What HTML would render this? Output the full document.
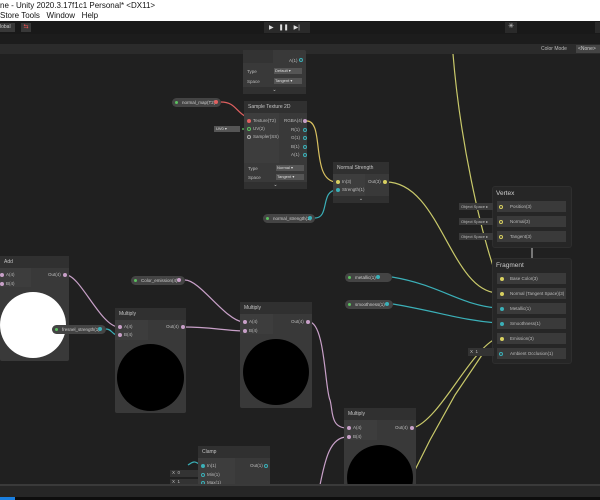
<!DOCTYPE html>
<html><head><style>
*{margin:0;padding:0;box-sizing:border-box}
html,body{width:600px;height:500px;overflow:hidden}
body{background:#202020;font-family:"Liberation Sans",sans-serif;position:relative}
#w{position:absolute;left:0;top:0;width:600px;height:500px;overflow:hidden}
.a{position:absolute}
.t{font-size:8px;color:#111;white-space:nowrap}
.node{position:absolute;background:#393939;border-radius:2px}
.hdr{height:12px;background:#303030;color:#c4c4c4;font-size:5px;padding:3px 4px}
.lbl{position:absolute;font-size:4.5px;color:#bbb;white-space:nowrap}
.pill{position:absolute;height:9px;background:#444;border-radius:5px;font-size:4.5px;color:#ccc;padding:2px 0 0 10px;white-space:nowrap}
.dot{position:absolute;width:4px;height:4px;border-radius:2px}
.blk{position:absolute;background:#262626;border:1px solid #2e2e2e;border-radius:3px}
.cir{position:absolute;border-radius:50%}
.os{position:absolute;width:34px;height:7px;background:#3a3a3a;font-size:4px;color:#bbb;padding:1px 2px}
.r{position:absolute;left:497px;width:69px;height:11px;background:#3a3a3a;font-size:4.5px;color:#bbb;padding:3px 0 0 13px}
</style></head><body><div id="w">
<div class="a" style="left:0;top:0;width:600px;height:21px;background:#fff"></div>
<div class="a t" style="left:0;top:1px">ne - Unity 2020.3.17f1c1 Personal* &lt;DX11&gt;</div>
<div class="a t" style="left:0;top:11px">Store Tools&nbsp;&nbsp; Window&nbsp;&nbsp; Help</div>
<div class="a" style="left:0;top:21px;width:600px;height:13px;background:#191919"></div>
<div class="a" style="left:0;top:23px;width:15px;height:9px;background:#383838;font-size:5px;color:#ccc;padding:1px 0 0 0">lobal</div>
<div class="a" style="left:21px;top:23px;width:10px;height:9px;background:#383838;color:#e55;font-size:6px;text-align:center">⇆</div>
<div class="a" style="left:264px;top:22px;width:46px;height:11px;background:#2a2a2a;color:#ddd;font-size:6px;padding:2px 0 0 5px">▶&nbsp;&nbsp;&nbsp;❚❚&nbsp;&nbsp;&nbsp;▶|</div>
<div class="a" style="left:505px;top:22px;width:12px;height:11px;background:#2a2a2a;color:#ccc;font-size:7px;text-align:center">✳</div>
<div class="a" style="left:595px;top:22px;width:5px;height:11px;background:#2a2a2a"></div>
<div class="a" style="left:0;top:34px;width:600px;height:10px;background:#1c1c1c"></div>
<div class="a" style="left:0;top:44px;width:600px;height:10px;background:#2b2b2b"></div>
<div class="a" style="left:541px;top:46px;font-size:5px;color:#bbb">Color Mode</div>
<div class="a" style="left:576px;top:45px;width:24px;height:8px;background:#444;font-size:5px;color:#ccc;padding:1px 0 0 2px">&lt;None&gt;</div>

<svg class="a" style="left:0;top:0" width="600" height="500" fill="none" stroke-width="1.2">
<path d="M453 54 C460 140 480 230 497 278" stroke="#c9c96a"/>
<path d="M386 182 C440 182 450 290 497 293" stroke="#c9c96a"/>
<path d="M392 277 C440 285 460 305 497 308" stroke="#3bb0b8"/>
<path d="M393 304 C440 312 460 320 497 323" stroke="#3bb0b8"/>
<path d="M413 428 C440 420 470 350 497 338" stroke="#c9c96a"/>
<path d="M484 352 L455 395 L430 440 L415 470" stroke="#c9c96a"/>
<path d="M221 102 C240 102 235 120 262 120" stroke="#e06060"/>
<path d="M242 129 L262 129" stroke="#5cc060"/>
<path d="M307 121 C325 121 310 182 337 182" stroke="#d8c060"/>
<path d="M315 218 C330 218 320 190 337 190" stroke="#3bb0b8"/>
<path d="M66 275 C80 275 100 325 118 327" stroke="#c8a0c8"/>
<path d="M106 329 C112 329 112 335 118 335" stroke="#3bb0b8"/>
<path d="M183 327 C210 327 220 330 243 331" stroke="#c8a0c8"/>
<path d="M185 280 C200 280 225 320 243 322" stroke="#c8a0c8"/>
<path d="M309 322 C325 322 325 390 330 400 C333 410 330 428 347 428" stroke="#c8a0c8"/>
<path d="M347 437 C330 437 325 460 320 485" stroke="#c8a0c8"/>
<path d="M188 465 C195 460 195 462 201 465" stroke="#3bb0b8"/>
<path d="M532 248 L532 258" stroke="#ccc" stroke-width="1"/>
</svg>

<div class="node" style="left:243px;top:50px;width:63px;height:44px"></div>
<div class="a" style="left:243px;top:50px;width:30px;height:13px;background:#333"></div>
<div class="lbl" style="left:289px;top:58px">A(1)</div><div class="dot" style="left:299px;top:58px;border:1px solid #3bb0b8"></div>
<div class="lbl" style="left:247px;top:69px">Type</div><div class="a" style="left:274px;top:68px;width:28px;height:6px;background:#555;font-size:4px;color:#ddd;padding-left:1px">Default ▾</div>
<div class="lbl" style="left:247px;top:79px">Space</div><div class="a" style="left:274px;top:78px;width:28px;height:6px;background:#555;font-size:4px;color:#ddd;padding-left:1px">Tangent ▾</div>
<div class="a" style="left:243px;top:87px;width:63px;height:7px;background:#303030;color:#ccc;font-size:5px;text-align:center">⌄</div>
<div class="node" style="left:244px;top:101px;width:63px;height:88px"><div class="hdr">Sample Texture 2D</div></div>
<div class="a" style="left:244px;top:113px;width:35px;height:50px;background:#3d3d3d"></div>
<div class="dot" style="left:247px;top:119px;background:#e06060"></div><div class="lbl" style="left:253px;top:118px">Texture(T2)</div>
<div class="dot" style="left:247px;top:127px;border:1px solid #5cc060"></div><div class="lbl" style="left:253px;top:126px">UV(2)</div>
<div class="dot" style="left:247px;top:135px;border:1px solid #aaa"></div><div class="lbl" style="left:253px;top:134px">Sampler(SS)</div>
<div class="a" style="left:214px;top:126px;width:26px;height:6px;background:#555;font-size:4px;color:#ddd;padding-left:2px">UV0 ▾</div>
<div class="lbl" style="left:284px;top:118px">RGBA(4)</div><div class="dot" style="left:303px;top:119px;background:#c8a0c8"></div>
<div class="lbl" style="left:291px;top:127px">R(1)</div><div class="dot" style="left:303px;top:128px;border:1px solid #3bb0b8"></div>
<div class="lbl" style="left:291px;top:135px">G(1)</div><div class="dot" style="left:303px;top:136px;border:1px solid #3bb0b8"></div>
<div class="lbl" style="left:291px;top:144px">B(1)</div><div class="dot" style="left:303px;top:145px;border:1px solid #3bb0b8"></div>
<div class="lbl" style="left:291px;top:152px">A(1)</div><div class="dot" style="left:303px;top:153px;border:1px solid #3bb0b8"></div>
<div class="lbl" style="left:248px;top:166px">Type</div><div class="a" style="left:276px;top:165px;width:28px;height:6px;background:#555;font-size:4px;color:#ddd;padding-left:1px">Normal ▾</div>
<div class="lbl" style="left:248px;top:175px">Space</div><div class="a" style="left:276px;top:174px;width:28px;height:6px;background:#555;font-size:4px;color:#ddd;padding-left:1px">Tangent ▾</div>
<div class="a" style="left:244px;top:182px;width:63px;height:7px;background:#303030;color:#ccc;font-size:5px;text-align:center">⌄</div>
<div class="pill" style="left:172px;top:98px;width:49px">normal_map(T2)</div>
<div class="dot" style="left:175px;top:101px;width:3px;height:3px;background:#5cc060"></div><div class="dot" style="left:214px;top:100px;background:#e06060"></div>
<div class="node" style="left:333px;top:162px;width:56px;height:41px"><div class="hdr">Normal Strength</div></div>
<div class="a" style="left:333px;top:174px;width:32px;height:22px;background:#3d3d3d"></div>
<div class="dot" style="left:336px;top:180px;background:#d8d060"></div><div class="lbl" style="left:342px;top:179px">In(3)</div>
<div class="dot" style="left:336px;top:188px;background:#3bb0b8"></div><div class="lbl" style="left:342px;top:187px">Strength(1)</div>
<div class="lbl" style="left:368px;top:179px">Out(3)</div><div class="dot" style="left:383px;top:180px;background:#d8d060"></div>
<div class="a" style="left:333px;top:196px;width:56px;height:7px;background:#303030;color:#ccc;font-size:5px;text-align:center">⌄</div>
<div class="pill" style="left:263px;top:214px;width:52px">normal_strength(1)</div>
<div class="dot" style="left:266px;top:217px;width:3px;height:3px;background:#5cc060"></div><div class="dot" style="left:308px;top:216px;background:#3bb0b8"></div>

<div class="blk" style="left:492px;top:186px;width:80px;height:62px"></div>
<div class="a" style="left:496px;top:190px;font-size:6.5px;color:#ccc">Vertex</div>
<div class="blk" style="left:492px;top:258px;width:80px;height:106px"></div>
<div class="a" style="left:496px;top:262px;font-size:6.5px;color:#ccc">Fragment</div>
<div class="r" style="top:201px">Position(3)</div>
<div class="r" style="top:216px">Normal(3)</div>
<div class="r" style="top:231px">Tangent(3)</div>
<div class="os" style="left:459px;top:203px">Object Space ▸</div>
<div class="os" style="left:459px;top:218px">Object Space ▸</div>
<div class="os" style="left:459px;top:233px">Object Space ▸</div>
<div class="dot" style="left:499px;top:205px;border:1px solid #d8d060"></div>
<div class="dot" style="left:499px;top:220px;border:1px solid #d8d060"></div>
<div class="dot" style="left:499px;top:235px;border:1px solid #d8d060"></div>
<div class="r" style="top:273px">Base Color(3)</div>
<div class="r" style="top:288px">Normal (Tangent Space)(3)</div>
<div class="r" style="top:303px">Metallic(1)</div>
<div class="r" style="top:318px">Smoothness(1)</div>
<div class="r" style="top:333px">Emission(3)</div>
<div class="r" style="top:348px">Ambient Occlusion(1)</div>
<div class="dot" style="left:500px;top:277px;background:#d8d060"></div>
<div class="dot" style="left:500px;top:292px;background:#d8d060"></div>
<div class="dot" style="left:500px;top:307px;background:#3bb0b8"></div>
<div class="dot" style="left:500px;top:322px;background:#3bb0b8"></div>
<div class="dot" style="left:500px;top:337px;background:#d8d060"></div>
<div class="dot" style="left:499px;top:352px;border:1px solid #3bb0b8"></div>
<div class="a" style="left:468px;top:348px;width:26px;height:8px;background:#333;font-size:4.5px;color:#bbb;padding:1px 2px">X&nbsp; 1</div>

<div class="pill" style="left:345px;top:273px;width:47px">metallic(1)</div>
<div class="dot" style="left:348px;top:276px;width:3px;height:3px;background:#5cc060"></div><div class="dot" style="left:376px;top:275px;background:#3bb0b8"></div>
<div class="pill" style="left:345px;top:300px;width:48px">smoothness(1)</div>
<div class="dot" style="left:348px;top:303px;width:3px;height:3px;background:#5cc060"></div><div class="dot" style="left:385px;top:302px;background:#3bb0b8"></div>

<div class="node" style="left:0;top:256px;width:69px;height:105px"><div class="hdr">Add</div></div>
<div class="a" style="left:0;top:268px;width:31px;height:19px;background:#3d3d3d"></div>
<div class="dot" style="left:0;top:273px;background:#c8a0c8"></div><div class="lbl" style="left:6px;top:272px">A(4)</div>
<div class="dot" style="left:0;top:282px;background:#c8a0c8"></div><div class="lbl" style="left:6px;top:281px">B(4)</div>
<div class="lbl" style="left:48px;top:272px">Out(4)</div><div class="dot" style="left:63px;top:273px;background:#c8a0c8"></div>
<div class="cir" style="left:0;top:292px;width:66px;height:66px;background:#fff"></div>
<div class="pill" style="left:52px;top:325px;width:54px">fresnel_strength(1)</div>
<div class="dot" style="left:55px;top:328px;width:3px;height:3px;background:#5cc060"></div><div class="dot" style="left:98px;top:327px;background:#3bb0b8"></div>
<div class="node" style="left:115px;top:308px;width:71px;height:105px"><div class="hdr">Multiply</div></div>
<div class="a" style="left:115px;top:320px;width:33px;height:20px;background:#3d3d3d"></div>
<div class="dot" style="left:118px;top:325px;background:#c8a0c8"></div><div class="lbl" style="left:124px;top:324px">A(4)</div>
<div class="dot" style="left:118px;top:333px;background:#c8a0c8"></div><div class="lbl" style="left:124px;top:332px">B(4)</div>
<div class="lbl" style="left:166px;top:324px">Out(4)</div><div class="dot" style="left:181px;top:325px;background:#c8a0c8"></div>
<div class="cir" style="left:117px;top:344px;width:67px;height:67px;background:#000"></div>
<div class="pill" style="left:131px;top:276px;width:54px">Color_emission(4)</div>
<div class="dot" style="left:134px;top:279px;width:3px;height:3px;background:#5cc060"></div><div class="dot" style="left:177px;top:278px;background:#c8a0c8"></div>
<div class="node" style="left:240px;top:302px;width:72px;height:106px"><div class="hdr">Multiply</div></div>
<div class="a" style="left:240px;top:314px;width:33px;height:20px;background:#3d3d3d"></div>
<div class="dot" style="left:243px;top:320px;background:#c8a0c8"></div><div class="lbl" style="left:249px;top:319px">A(4)</div>
<div class="dot" style="left:243px;top:329px;background:#c8a0c8"></div><div class="lbl" style="left:249px;top:328px">B(4)</div>
<div class="lbl" style="left:291px;top:319px">Out(4)</div><div class="dot" style="left:306px;top:320px;background:#c8a0c8"></div>
<div class="cir" style="left:243px;top:339px;width:66px;height:66px;background:#000"></div>
<div class="node" style="left:344px;top:408px;width:72px;height:78px"><div class="hdr">Multiply</div></div>
<div class="a" style="left:344px;top:420px;width:33px;height:20px;background:#3d3d3d"></div>
<div class="dot" style="left:347px;top:426px;background:#c8a0c8"></div><div class="lbl" style="left:353px;top:425px">A(4)</div>
<div class="dot" style="left:347px;top:435px;background:#c8a0c8"></div><div class="lbl" style="left:353px;top:434px">B(4)</div>
<div class="lbl" style="left:395px;top:425px">Out(4)</div><div class="dot" style="left:410px;top:426px;background:#c8a0c8"></div>
<div class="cir" style="left:347px;top:445px;width:66px;height:66px;background:#000"></div>
<div class="node" style="left:198px;top:446px;width:72px;height:40px"><div class="hdr">Clamp</div></div>
<div class="a" style="left:198px;top:458px;width:37px;height:28px;background:#3d3d3d"></div>
<div class="dot" style="left:201px;top:464px;background:#3bb0b8"></div><div class="lbl" style="left:207px;top:463px">In(1)</div>
<div class="dot" style="left:201px;top:473px;border:1px solid #3bb0b8"></div><div class="lbl" style="left:207px;top:472px">Min(1)</div>
<div class="dot" style="left:201px;top:481px;border:1px solid #3bb0b8"></div><div class="lbl" style="left:207px;top:480px">Max(1)</div>
<div class="lbl" style="left:250px;top:463px">Out(1)</div><div class="dot" style="left:264px;top:464px;border:1px solid #3bb0b8"></div>
<div class="a" style="left:170px;top:470px;width:28px;height:7px;background:#333;font-size:4.5px;color:#bbb;padding:0 2px">X&nbsp; 0</div>
<div class="a" style="left:170px;top:479px;width:28px;height:6px;background:#333;font-size:4.5px;color:#bbb;padding:0 2px">X&nbsp; 1</div>

<div class="a" style="left:0;top:484px;width:600px;height:2px;background:#3a3a3a"></div>
<div class="a" style="left:0;top:486px;width:600px;height:11px;background:#262626"></div>
<div class="a" style="left:0;top:497px;width:600px;height:3px;background:#0d0d0d"></div>
<div class="a" style="left:0;top:497px;width:15px;height:3px;background:#1a7fe0"></div>
</div></body></html>
